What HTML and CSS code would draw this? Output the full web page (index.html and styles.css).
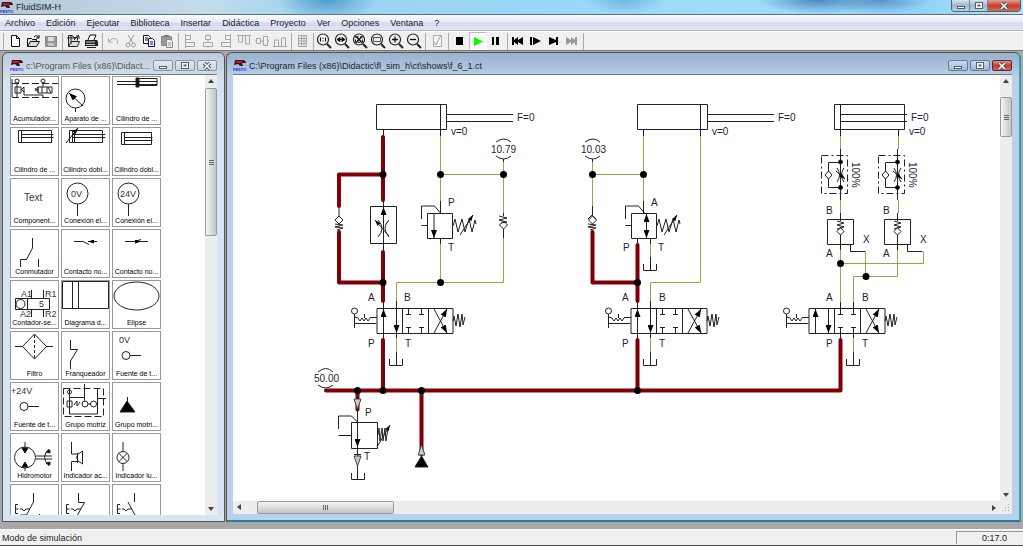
FILE: index.html
```
<!DOCTYPE html>
<html lang="es">
<head>
    <meta charset="UTF-8">
    <meta name="viewport" content="width=device-width, initial-scale=1.0">
    <title>FluidSIM-H</title>
    <link rel="stylesheet" href="styles.css">
</head>
<body>
    <!-- shared symbols -->
    <svg class="defs" width="0" height="0" aria-hidden="true">
        <defs>
            <symbol id="festo" viewBox="0 0 14 13">
                <path d="M2 1h9l2 2v1H9l1 3H7L5 5 1 6z" fill="#3a1420"/>
                <path d="M3 2h6v2H3z" fill="#d0102c"/>
                <text x="0" y="12" class="logo">FESTO</text>
            </symbol>
            <symbol id="win-min" viewBox="0 0 10 8"><rect x="1.500" y="4.500" width="7" height="2" fill="#fff" stroke="#555f6b"/></symbol>
            <symbol id="win-max" viewBox="0 0 10 8"><rect x="1.500" y=".500" width="7" height="6" fill="#fff" stroke="#555f6b"/><rect x="4" y="3" width="2" height="1" fill="#555f6b" stroke="#555f6b"/></symbol>
            <symbol id="win-close" viewBox="0 0 10 8"><path d="M2 1l6 6M8 1L2 7" stroke="#4d4f5a" stroke-width="3.400"/><path d="M2 1l6 6M8 1L2 7" stroke="#fff" stroke-width="1.600"/></symbol>
            <symbol id="lens" viewBox="0 0 18 18"><circle cx="8" cy="7.500" r="5.500" fill="none" stroke="#222" stroke-width="1.200"/><path d="M12 12l4 4" stroke="#222" stroke-width="2"/></symbol>
            <marker id="tip" viewBox="0 0 8 6" refX="8" refY="3" markerWidth="8" markerHeight="6" markerUnits="userSpaceOnUse" orient="auto"><path d="M0 0l8 3-8 3z"/></marker>
            <marker id="tip-s" viewBox="0 0 6 4" refX="6" refY="2" markerWidth="6" markerHeight="4" markerUnits="userSpaceOnUse" orient="auto"><path d="M0 0l6 2-6 2z"/></marker>
            <!-- 4/3 way valve with hand lever -->
            <g id="valve43">
                <path d="M377 308.500h76v25h-76zM402.500 308v25M428.500 308v25"/>
                <path d="M383.500 333v-24" marker-end="url(#tip)"/>
                <path d="M396.500 309v24" marker-end="url(#tip)"/>
                <path d="M408.500 309v5M406 314.500h5M421.500 309v5M419 314.500h5M408.500 333v-6M406 327.500h5M421.500 333v-6M419 327.500h5"/>
                <path d="M434 333l13-24" marker-end="url(#tip)"/>
                <path d="M434 309l13 24" marker-end="url(#tip)"/>
                <path d="M453 321l1-5 2 10 2-12 2 13 2-13 1 11 2-8"/>
                <circle cx="354.500" cy="311" r="3"/>
                <path d="M354.500 314v14M354.500 323.500h22M370 317.500h7M355 317l3 1 2 3 2-3 2 3 2-3 2 3 2-3M364.500 318v-4"/>
            </g>
            <path id="tank" d="M389.500 359v6.500h13V359"/>
            <g id="relief-pilot">
                <path d="M440.500 213l-6-7h-13v13M421.500 225.500h6M427.500 213.500h25v25h-25z"/>
                <path d="M453 226l2-7 3 13 4-13 3 13 4-13 3 13 3-12 1 4"/>
                <path d="M460 235l13-20" marker-end="url(#tip-s)"/>
            </g>
            <g id="throttle">
                <path class="dashed" d="M821.500 155.500h26v38h-26z"/>
                <path d="M840.500 149v51M840.500 162.500h-12v9M828.500 178v9.500h12M828.500 171l3.500 4-3.500 4-3.500-4zM837 168q5 7 0 14M844 168q-5 7 0 14"/>
                <path d="M836 171l9 8" marker-end="url(#tip-s)"/>
                <circle cx="840.500" cy="162" r="2" fill="#000"/><circle cx="840.500" cy="187.500" r="2" fill="#000"/>
            </g>
            <g id="lock">
                <path d="M827.500 219.500h26v25h-26zM840.500 213v8M840.500 235v15M850.500 245v6.500h15M837 221l7 2-7 2 7 2-7 2M840.500 227.500l3.500 4-3.500 3.500-3.500-3.500z"/>
            </g>
        </defs>
    </svg>

    <header class="titlebar">
        <svg class="app-icon"><use href="#festo"/></svg>
        <h1>FluidSIM-H</h1>
        <div class="app-buttons">
            <button aria-label="Minimizar"><svg><use href="#win-min"/></svg></button>
            <button aria-label="Restaurar"><svg><use href="#win-max"/></svg></button>
            <button class="close" aria-label="Cerrar"><svg><use href="#win-close"/></svg></button>
        </div>
    </header>

    <nav class="menu">
        <button>Archivo</button>
        <button>Edición</button>
        <button>Ejecutar</button>
        <button>Biblioteca</button>
        <button>Insertar</button>
        <button>Didáctica</button>
        <button>Proyecto</button>
        <button>Ver</button>
        <button>Opciones</button>
        <button>Ventana</button>
        <button>?</button>
    </nav>

    <div class="toolbar">
        <button aria-label="Nuevo"><svg viewBox="0 0 18 18"><path d="M5.500 3.500h5l3 3v8h-8zM10.500 3.500v3h3" fill="#fff" stroke="#111"/></svg></button>
        <button aria-label="Abrir"><svg viewBox="0 0 18 18"><path d="M3.500 14.500v-8h4l1 1h4v2M3.500 14.500l3-5h9l-3 5z" fill="#ddd" stroke="#111"/><path d="M10 5q3-3 5 1M15 3v3h-3" fill="none" stroke="#111"/></svg></button>
        <button aria-label="Guardar"><svg viewBox="0 0 18 18"><path d="M3.500 4.500h11v10h-11z" fill="#999" stroke="#888"/><path d="M6 5h6v4H6z" fill="#ddd"/><path d="M6 11h6v3H6z" fill="#c8c8c8"/></svg></button>
        <span class="sep"></span>
        <button aria-label="Vista previa"><svg viewBox="0 0 18 18"><path d="M4.500 14.500v-11h4l1 2h4v3M4.500 14.500l3-5h8l-2 5z" fill="#ddd" stroke="#222"/><path d="M3 6h8M7 3v9M12 4h3v3M10 8l5-5" stroke="#222" fill="none"/></svg></button>
        <button aria-label="Imprimir"><svg viewBox="0 0 18 18"><path d="M6 8l2-5h6l-2 5" fill="#fff" stroke="#111"/><path d="M3 8h12l1 2v4H3z" fill="#222"/><path d="M4 10h9M4 12.500h9" stroke="#ccc"/><path d="M5 15.500h9" stroke="#222"/></svg></button>
        <span class="sep"></span>
        <button disabled aria-label="Deshacer"><svg viewBox="0 0 18 18"><path d="M4.500 6v4h4M5 9q4-4 7-2t1 5" fill="none" stroke="#aaa"/></svg></button>
        <button disabled aria-label="Cortar"><svg viewBox="0 0 18 18"><path d="M6 3l5 8M12 3l-5 8" stroke="#999"/><circle cx="6" cy="13" r="2" fill="none" stroke="#999"/><circle cx="11.500" cy="13" r="2" fill="none" stroke="#999"/></svg></button>
        <button aria-label="Copiar"><svg viewBox="0 0 18 18"><path d="M3.500 3.500h5l2 2v6h-7z" fill="#fff" stroke="#111"/><path d="M5 6h3M5 8h3" stroke="#111"/><path d="M8.500 6.500h4l2 2v6h-6z" fill="#fff" stroke="#10107a"/><path d="M10 10h3M10 12h3" stroke="#10107a"/></svg></button>
        <button disabled aria-label="Pegar"><svg viewBox="0 0 18 18"><path d="M3.500 4.500h10v9h-10z" fill="#999" stroke="#888"/><path d="M6 3h5v2H6z" fill="#777"/><path d="M8.500 7.500h4l2 2v6h-6z" fill="#eee" stroke="#888"/><path d="M10 11h3M10 13h3" stroke="#999"/></svg></button>
        <span class="sep wide"></span>
        <button disabled aria-label="Alinear a la izquierda"><svg viewBox="0 0 18 18"><path class="align" d="M4.500 2v14M4.500 3.500h5v4h-5M4.500 10.500h9v4h-9"/></svg></button>
        <button disabled aria-label="Centrar horizontalmente"><svg viewBox="0 0 18 18"><path class="align" d="M6.500 3.500h5v4h-5zM4.500 10.500h9v4h-9zM9 2v1M9 8v2M9 15v1"/></svg></button>
        <button disabled aria-label="Alinear a la derecha"><svg viewBox="0 0 18 18"><path class="align" d="M13.500 2v14M13.500 3.500h-5v4h5M13.500 10.500h-9v4h9"/></svg></button>
        <button disabled aria-label="Alinear arriba"><svg viewBox="0 0 18 18"><path class="align" d="M2 3.500h14M3.500 4v6h4V4M10.500 4v8h4V4"/></svg></button>
        <button disabled aria-label="Centrar verticalmente"><svg viewBox="0 0 18 18"><path class="align" d="M3.500 6.500h4v5h-4zM10.500 4.500h4v9h-4zM2 9h1M8 9h2M15 9h1"/></svg></button>
        <button disabled aria-label="Alinear abajo"><svg viewBox="0 0 18 18"><path class="align" d="M2 14.500h14M3.500 14V8h4v6M10.500 14V6h4v8"/></svg></button>
        <span class="sep"></span>
        <button disabled aria-label="Cuadrícula"><svg viewBox="0 0 18 18"><path class="align" d="M5.500 3.500h8v11h-8zM8.500 3v11M11 3v11M5 6.500h8M5 9h8M5 11.500h8"/></svg></button>
        <span class="sep"></span>
        <button aria-label="Escala 1:1"><svg viewBox="0 0 18 18"><use href="#lens"/><path d="M5.500 5.500v4M8 6v1M8 8.500v1M10.500 5.500v4" stroke="#111"/></svg></button>
        <button aria-label="Vista anterior"><svg viewBox="0 0 18 18"><use href="#lens"/><path d="M4 7.500l3-2v4zM12 7.500l-3-2v4zM5 7.500h6" fill="#111" stroke="#111"/></svg></button>
        <button aria-label="Ajustar a ventana"><svg viewBox="0 0 18 18"><use href="#lens"/><path d="M5 4.500l6 6M11 4.500l-6 6" stroke="#111" stroke-width="1.500"/><path d="M4.500 4.500h7v6h-7z" fill="none" stroke="#333" stroke-dasharray="3 2"/></svg></button>
        <button aria-label="Zoom de zona"><svg viewBox="0 0 18 18"><use href="#lens"/><path d="M4.500 5.500h7v4h-7z" fill="none" stroke="#555"/></svg></button>
        <button aria-label="Ampliar"><svg viewBox="0 0 18 18"><use href="#lens"/><path d="M5 7.500h6M8 4.500v6" stroke="#111" stroke-width="1.300"/></svg></button>
        <button aria-label="Reducir"><svg viewBox="0 0 18 18"><use href="#lens"/><path d="M5 7.500h6" stroke="#111" stroke-width="1.300"/></svg></button>
        <span class="sep wide"></span>
        <button disabled aria-label="Comprobar"><svg viewBox="0 0 18 18"><path d="M5.500 3.500h8v11h-8z" fill="#f6f6f6" stroke="#aaa"/><path d="M6 10l2 3 5-10" fill="none" stroke="#999"/></svg></button>
        <span class="sep wide"></span>
        <button aria-label="Parar"><svg viewBox="0 0 18 18"><path d="M5 5h7v8H5z"/></svg></button>
        <button class="pressed" aria-label="Simular"><svg viewBox="1 1 16 16"><path d="M5 5l9 4.500L5 14z" fill="#0f0"/></svg></button>
        <button aria-label="Pausa"><svg viewBox="0 0 18 18"><path d="M5 5h2v8H5zM9 5h3v8H9z"/></svg></button>
        <span class="sep"></span>
        <button aria-label="Reiniciar"><svg viewBox="0 0 18 18"><path d="M3 5h2v3l4-3v3l5-3v8l-5-3v3l-4-3v3H3z"/></svg></button>
        <button aria-label="Paso"><svg viewBox="0 0 18 18"><path d="M3 5h2v8H3zM6 5l8 4-8 4z"/></svg></button>
        <button aria-label="Siguiente estado"><svg viewBox="0 0 18 18"><path d="M4 5l7 3V5h2v8h-2v-3l-7 3z"/></svg></button>
        <button disabled aria-label="Siguiente tema"><svg viewBox="0 0 18 18"><path d="M3 5l5 3V5l4 3V5h2v8h-2v-3l-4 3v-3l-5 3z" fill="#999"/></svg></button>
        <span class="sep"></span>
    </div>

    <main class="workspace">
        <section class="window library">
            <div class="window-title">
                <svg class="app-icon"><use href="#festo"/></svg>
                <h2>c:\Program Files (x86)\Didact...</h2>
                <button aria-label="Minimizar"><svg><use href="#win-min"/></svg></button>
                <button aria-label="Maximizar"><svg><use href="#win-max"/></svg></button>
                <button aria-label="Cerrar"><svg><use href="#win-close"/></svg></button>
            </div>
            <div class="client">
                <ul class="tiles">
                    <li><svg viewBox="0 0 47 37"><path d="M1 6.500h46M1 20.500h46" stroke-dasharray="7 3"/><path d="M1 2v18M6 6v15M32 5v5M13 14v4h19v3M10 13l3-3v5l-3-3M24 11l3 4v-5l-3 4"/><path d="M4 10h6v6H4zM27 10h14v6H27z"/><path d="M31 10v6M36 10v6M37 10l3 6"/><circle cx="6" cy="4" r="2"/><circle cx="32" cy="4" r="2"/></svg>Acumulador...</li>
                    <li><svg viewBox="0 0 47 37"><circle cx="13.500" cy="21.500" r="9.500"/><path d="M21 29L7 16" marker-end="url(#tip)"/><path d="M13.500 31v4"/></svg>Aparato de ...</li>
                    <li><svg viewBox="0 0 47 37"><path d="M4 4.500h40M4 7.500h40M24 1.500h20v7H24z"/><path d="M23 1h3v9h-3z" fill="#111"/></svg>Cilindro de ...</li>
                    <li><svg viewBox="0 0 47 37"><path d="M7.500 2.500h33v12h-33zM10.500 2v12M10.500 6.500h32M10.500 9.500h32"/></svg>Cilindro de ...</li>
                    <li><svg viewBox="0 0 47 37"><path d="M7.500 2.500h33v12h-33zM10.500 2v12M12.500 2v12M10.500 6.500h33M10.500 9.500h33"/><path d="M4 15L16 0" marker-end="url(#tip-s)"/></svg>Cilindro dobl...</li>
                    <li><svg viewBox="0 0 47 37"><path d="M8.500 4.500h30v12h-30zM11.500 4v12M11.500 9.500h28M11.500 12.500h28"/></svg>Cilindro dobl...</li>
                    <li><svg viewBox="0 0 47 37"><text class="big" x="13" y="22">Text</text></svg>Component...</li>
                    <li><svg viewBox="0 0 47 37"><circle cx="15.500" cy="14.500" r="10.500"/><path d="M15.500 25v12"/><text x="9" y="18">0V</text></svg>Conexión el...</li>
                    <li><svg viewBox="0 0 47 37"><circle cx="15.500" cy="14.500" r="10.500"/><path d="M15.500 25v12"/><text x="7" y="18">24V</text></svg>Conexión el...</li>
                    <li><svg viewBox="0 0 47 37"><path d="M21.500 8v10l-6 11.500h-6V37M27.500 29v8"/></svg>Conmutador</li>
                    <li><svg viewBox="0 0 47 37"><path d="M12 11.500h9l6 3M35 11.500h-7"/><path d="M35 11.500h-9" marker-end="url(#tip-s)"/></svg>Contacto no...</li>
                    <li><svg viewBox="0 0 47 37"><path d="M12 11.500h9l7-2M35 11.500h-7"/><path d="M21 11.500h7" marker-end="url(#tip-s)"/></svg>Contacto no...</li>
                    <li><svg viewBox="0 0 47 37"><path d="M4.500 17.500h34v11h-34zM16.500 17v11M20.500 9v8M32.500 9v8M20.500 29v7M32.500 29v7"/><circle cx="9.500" cy="23" r="4.500"/><text x="10" y="16">A1</text><text x="34" y="16">R1</text><text x="9" y="36">A2</text><text x="34" y="36">R2</text><text x="28" y="26">5</text></svg>Contador-se...</li>
                    <li><svg viewBox="0 0 47 37"><path d="M.500.500h46v27H.500zM10.500 0v27M16.500 0v27"/></svg>Diagrama d...</li>
                    <li><svg viewBox="0 0 47 37"><ellipse cx="23.500" cy="15" rx="22.500" ry="14"/></svg>Elipse</li>
                    <li><svg viewBox="0 0 47 37"><path d="M23.500 2l12 12.500-12 12.500-12-12.500zM4 14.500h8M35 14.500h7"/><path d="M23.500 3v24" stroke-dasharray="3 2"/></svg>Filtro</li>
                    <li><svg viewBox="0 0 47 37"><path d="M8.500 8v9.500h7L8.500 29v8"/></svg>Franqueador</li>
                    <li><svg viewBox="0 0 47 37"><text x="6" y="11">0V</text><circle cx="13" cy="23.500" r="4"/><path d="M17 23.500h11"/></svg>Fuente de t...</li>
                    <li><svg viewBox="0 0 47 37"><text x="0" y="11">+24V</text><circle cx="13" cy="23.500" r="4"/><path d="M17 23.500h11"/></svg>Fuente de t...</li>
                    <li><svg viewBox="0 0 47 37"><path d="M1.500 5.500h40v28h-40z" stroke-dasharray="7 3"/><path d="M7.500 5v26h28V5M22.500 1v17M7 14.500h16M36 15.500h8M5 18h5v6H5zM12 22l3-4v5l3-4M26 21h3"/><circle cx="23" cy="21" r="3"/><circle cx="31.500" cy="21" r="3"/><circle cx="7.500" cy="9" r="2"/></svg>Grupo motriz</li>
                    <li><svg viewBox="0 0 47 37"><path d="M14.500 14v6"/><path d="M7 29h15l-8-11z" fill="#000"/></svg>Grupo motri...</li>
                    <li><svg viewBox="0 0 47 37"><circle cx="14" cy="23.500" r="10.500"/><path d="M14 8v8M14 32v5M25 22h16M25 25h16M38 15q-9 8 0 17"/><path d="M11 14h6l-3 5zM11 33h6l-3-5zM35 18l4-2v3zM35 29l4 2v-3z" fill="#000"/></svg>Hidromotor</li>
                    <li><svg viewBox="0 0 47 37"><path d="M9.500 8v12h6M9.500 37V27.500h6M15.500 19v10M20.500 17v13q-6-3-6-6.500t6-6.500"/></svg>Indicador ac...</li>
                    <li><svg viewBox="0 0 47 37"><circle cx="10" cy="23.500" r="6"/><path d="M10 8v9M10 30v7M6 19.500l8 8M14 19.500l-8 8"/></svg>Indicador lu...</li>
                    <li><svg viewBox="0 0 47 37"><path d="M22.500 8v9l-7 13h-6M7 19.500H4.500v9H7M4.500 24h3M9 24h2l2 2 2-2h4M28.500 29v8"/></svg></li>
                    <li><svg viewBox="0 0 47 37"><path d="M16.500 8v9.500h6l-7 12.500M7 19.500H4.500v9H7M4.500 24h3M9 24h2l2 2 2-2h4"/></svg></li>
                    <li><svg viewBox="0 0 47 37"><path d="M21.500 8v9M15 17l7 13M7 19.500H4.500v9H7M4.500 24h3M9 24h2l2 2 2-2h3"/></svg></li>
                </ul>
                <div class="vscroll">
                    <button aria-label="Subir"><svg viewBox="0 0 6 4"><path d="M0 4l3-4 3 4z"/></svg></button>
                    <div class="thumb long"><i></i><i></i><i></i></div>
                    <button aria-label="Bajar"><svg viewBox="0 0 6 4"><path d="M0 0h6L3 4z"/></svg></button>
                </div>
            </div>
        </section>

        <section class="window circuit active">
            <div class="window-title">
                <svg class="app-icon"><use href="#festo"/></svg>
                <h2>C:\Program Files (x86)\Didactic\fl_sim_h\ct\shows\f_6_1.ct</h2>
                <button aria-label="Minimizar"><svg><use href="#win-min"/></svg></button>
                <button aria-label="Maximizar"><svg><use href="#win-max"/></svg></button>
                <button class="close" aria-label="Cerrar"><svg><use href="#win-close"/></svg></button>
            </div>
            <div class="client">
                <div class="canvas">
                    <svg class="drawing" viewBox="233 75 768 427">
                        <!-- tubes without pressure -->
                        <g class="low">
                            <path d="M440.500 136v65M440.500 174.500h63.500M503.500 161v52M503.500 238v44.500h-107V301M440.500 243v39M396.500 338v14"/>
                            <path d="M643.500 136v65M643.500 174.500h-51M592.500 161v46M700.500 136v146.500h-50V301M650.500 243v14M650.500 338v14"/>
                            <path d="M840.500 136v13M898.500 136v13M840.500 200v13M898.500 200v13M840.500 250v52M865.500 252v24M897.500 250v26.500h-44V302M923.500 252v11.500h-83M853.500 338v14"/>
                        </g>
                        <!-- pressure tubes -->
                        <g class="high">
                            <path d="M383 137v63M383 174.500h-44V206M339 232v50.500h44M383 252v49M383 340v50.500"/>
                            <path d="M592.500 232v50.500h45M637.500 245v56M637.500 340v50.500"/>
                            <path d="M326 390.500h514.500V340M357.500 390.500v19M421.500 390.500v64"/>
                        </g>

                        <g class="part">
                            <!-- circuit 1 -->
                            <path d="M376.500 104.500h70v25h-70zM440.500 104v32M447 114.500h66M447 121.500h66M383.500 130v6"/>
                            <path d="M370.500 206.500h26v37h-26zM383.500 250v-6M383.500 201v6M378 220q8 8 0 17M389 220q-8 8 0 17"/>
                            <path d="M383.500 244v-37" marker-end="url(#tip)"/>
                            <path d="M389 236l-14-16" marker-end="url(#tip-s)"/>
                            <path d="M339 207v9M339 216l4 4-4 4-4-4zM335 224l8 1-8 2 8 1-6 2"/>
                            <path d="M440.500 201v12M440.500 239v5M503.500 159v3M503.500 213v3M499 216l8 2-8 2 8 2-6 1M503.500 221l4 4-4 4-4-4zM503.500 229v9"/>
                            <use href="#relief-pilot"/>
                            <path d="M434 214v24" marker-end="url(#tip)"/>
                            <path d="M396.500 301v37M383.500 302v37M396.500 352v13"/>
                            <use href="#valve43"/>
                            <use href="#tank"/>
                            <path d="M496 142q8-6 15 0M496 156q8 6 15 0"/>

                            <!-- circuit 2 -->
                            <path d="M637.500 104.500h70v25h-70zM700.500 104v32M708 114.500h66M708 121.500h66M643.500 130v6M643.500 201v12"/>
                            <path d="M592.500 159v3M592.500 206v9M592.500 216l4 4-4 4-4-4zM588 219l4-4 4 4M588 224l8 1-8 2 8 1-6 2"/>
                            <use href="#relief-pilot" transform="translate(204)"/>
                            <path d="M646.500 226v-12" marker-end="url(#tip)"/>
                            <path d="M646.500 226v12" marker-end="url(#tip)"/>
                            <path d="M637.500 239v6M650.500 239v5M650.500 257v13M650.500 301v37M637.500 302v37M650.500 352v13"/>
                            <use href="#tank" transform="translate(254 -95)"/>
                            <use href="#valve43" transform="translate(254)"/>
                            <use href="#tank" transform="translate(254)"/>
                            <path d="M585 142q8-6 15 0M585 156q8 6 15 0"/>

                            <!-- circuit 3 -->
                            <path d="M834.500 104.500h70v25h-70zM840.500 104v32M841 114.500h66M841 121.500h66M898.500 130v6"/>
                            <use href="#throttle"/>
                            <use href="#throttle" transform="translate(57)"/>
                            <use href="#lock"/>
                            <use href="#lock" transform="translate(57)"/>
                            <use href="#valve43" transform="translate(432)"/>
                            <path d="M840.500 302v7M853.500 302v7M840.500 333v6M853.500 333v5M853.500 352v13"/>
                            <use href="#tank" transform="translate(457)"/>

                            <!-- supply -->
                            <path d="M318 372q8-7 15 0M318 385q8 6 15 0"/>
                            <path d="M357.500 409v70M357.500 422l-6-6h-13v13M338.500 435.500h13M351.500 422.500h26v26h-26zM351.500 473v6.500h13V473M354 454.500h7"/>
                            <path d="M357.500 425v22" marker-end="url(#tip)"/>
                            <path d="M378 435l1-7 1 13 2-13 1 13 2-13 1 13 2-13"/>
                            <path d="M377 447l13-22" marker-end="url(#tip-s)"/>
                            <path class="flow" d="M354 399h7l-3.500 10zM354 456h7l-3.500 10zM418 455h7l-3.500-10z"/>
                            <path d="M415 467h13l-6.500-11z" fill="#000"/>
                        </g>

                        <g class="nodes">
                            <circle cx="383" cy="174.500" r="3.500"/><circle cx="440.500" cy="174.500" r="3.500"/><circle cx="503.500" cy="174.500" r="3.500"/>
                            <circle cx="383" cy="282.500" r="3.500"/><circle cx="440.500" cy="282.500" r="3.500"/>
                            <circle cx="592.500" cy="174.500" r="3.500"/><circle cx="643.500" cy="174.500" r="3.500"/><circle cx="637.500" cy="282.500" r="3.500"/>
                            <circle cx="840.500" cy="263.500" r="3.500"/><circle cx="866" cy="276.500" r="3.500"/>
                            <circle cx="357.500" cy="390.500" r="3.500"/><circle cx="383" cy="390.500" r="3.500"/><circle cx="421.500" cy="390.500" r="3.500"/><circle cx="637.500" cy="390.500" r="3.500"/>
                        </g>

                        <g class="labels">
                            <text x="517" y="121">F=0</text><text x="451" y="135">v=0</text>
                            <text x="778" y="121">F=0</text><text x="712" y="135">v=0</text>
                            <text x="911" y="121">F=0</text><text x="909" y="135">v=0</text>
                            <text x="491" y="153">10.79</text><text x="581" y="153">10.03</text><text x="314" y="382">50.00</text>
                            <text x="448" y="206">P</text><text x="448" y="251">T</text>
                            <text x="651" y="206">A</text><text x="623" y="251">P</text><text x="658" y="251">T</text>
                            <text x="368" y="301">A</text><text x="404" y="301">B</text><text x="368" y="347">P</text><text x="405" y="347">T</text>
                            <text x="622" y="301">A</text><text x="659" y="301">B</text><text x="622" y="347">P</text><text x="659" y="347">T</text>
                            <text x="826" y="301">A</text><text x="862" y="301">B</text><text x="826" y="347">P</text><text x="862" y="347">T</text>
                            <text x="826" y="214">B</text><text x="883" y="214">B</text>
                            <text x="826" y="257">A</text><text x="883" y="257">A</text>
                            <text x="863" y="243">X</text><text x="920" y="243">X</text>
                            <text x="365" y="416">P</text><text x="364" y="460">T</text>
                            <text transform="translate(852 162) rotate(90)">100%</text>
                            <text transform="translate(909 162) rotate(90)">100%</text>
                        </g>
                    </svg>
                </div>
                <div class="vscroll">
                    <button aria-label="Subir"><svg viewBox="0 0 6 4"><path d="M0 4l3-4 3 4z"/></svg></button>
                    <div class="thumb"><i></i><i></i><i></i></div>
                    <button aria-label="Bajar"><svg viewBox="0 0 6 4"><path d="M0 0h6L3 4z"/></svg></button>
                </div>
                <div class="hscroll">
                    <button aria-label="Izquierda"><svg viewBox="0 0 4 6"><path d="M4 0v6L0 3z"/></svg></button>
                    <div class="thumb"><i></i><i></i><i></i></div>
                    <button aria-label="Derecha"><svg viewBox="0 0 4 6"><path d="M0 0v6l4-3z"/></svg></button>
                </div>
                <svg class="grip" viewBox="0 0 12 13"><path d="M8 3h1v1H8zM5 6h1v1H5zM8 6h1v1H8zM2 9h1v1H2zM5 9h1v1H5zM8 9h1v1H8z"/></svg>
            </div>
        </section>
    </main>

    <footer class="status">
        <span>Modo de simulación</span>
        <time>0:17.0</time>
    </footer>
</body>
</html>
```
FILE: styles.css
```
* {
    box-sizing: border-box;
}
body {
    margin: 0;
    height: 100vh;
    display: flex;
    flex-direction: column;
    overflow: hidden;
    font-family: "Liberation Sans", Arial, sans-serif;
    font-size: 9px;
    color: #222;
    background: #f0f0f0;
}
button {
    margin: 0;
    padding: 0;
    border: 0;
    background: none;
    font: inherit;
    color: inherit;
}
h1, h2 {
    margin: 0;
    font-size: 9px;
    font-weight: normal;
    white-space: nowrap;
}
.defs {
    position: absolute;
}
.logo {
    font-size: 4px;
    font-weight: bold;
    fill: #1a1af0;
}
.app-icon {
    width: 14px;
    height: 13px;
    flex: none;
}

/* main title bar */
.titlebar {
    display: flex;
    align-items: center;
    gap: 2px;
    height: 15px;
    flex: none;
    border-bottom: 1px solid #5b7186;
    background:
        radial-gradient(ellipse 60px 14px at 80% 0, #4f86bd, transparent),
        radial-gradient(ellipse 50px 14px at 86% 0, #5a92c6, transparent),
        radial-gradient(ellipse 50px 20px at 32% 0, #4f9dcc, transparent),
        radial-gradient(ellipse 40px 14px at 61% 0, #6fb4df, transparent),
        linear-gradient(90deg, #b4c8d8, #c3dcea 20%, #9fd3ef 30%, #9bd6f8 50%, #9fdcfb 75%, #8fd3f7 90%, #b8e4f8);
}
.app-buttons {
    display: flex;
    align-self: flex-start;
    height: 12px;
    margin-left: auto;
    margin-right: 2px;
    border: 1px solid #4d6478;
    border-top: 0;
    border-radius: 0 0 4px 4px;
    overflow: hidden;
}
.app-buttons button {
    width: 18px;
    display: flex;
    align-items: center;
    justify-content: center;
    border-right: 1px solid #6f8798;
    background: linear-gradient(#d3e3ee, #9fb8c9 50%, #b9d4e4);
}
.app-buttons .close {
    width: 32px;
    border: 0;
    background: linear-gradient(#e2a397, #c5412d 50%, #d66a50);
}
.app-buttons svg, .window-title button svg {
    width: 10px;
    height: 8px;
}

.menu {
    display: flex;
    align-items: center;
    height: 16px;
    flex: none;
    border-bottom: 1px solid #b4b7c2;
    background: linear-gradient(#fbfcff, #e8ecf8 45%, #d5dbef 55%, #dfe4f5);
}
.menu button {
    padding: 0 6px 0 5px;
}

/* toolbar */
.toolbar {
    display: flex;
    align-items: center;
    height: 20px;
    flex: none;
    padding-left: 3px;
    border-top: 1px solid #fff;
    border-bottom: 1px solid #777;
    background: #f0f0f0;
}
.toolbar::before {
    content: "";
    width: 2px;
    height: 17px;
    border-left: 1px solid #aaa;
}
.toolbar button {
    width: 18px;
    height: 18px;
    flex: none;
}
.toolbar svg {
    display: block;
    width: 18px;
    height: 18px;
}
.toolbar .pressed {
    border: 1px solid #bbb;
    border-right-color: #fff;
    border-bottom-color: #fff;
    background: #f8f8f8;
}
.toolbar .pressed svg {
    width: 16px;
    height: 16px;
}
.align {
    fill: none;
    stroke: #a6a6a6;
}
.sep {
    width: 4px;
    height: 17px;
    flex: none;
    background: linear-gradient(#aaa, #aaa) center / 1px 100% no-repeat;
}
.sep.wide {
    width: 5px;
}

/* MDI area */
.workspace {
    display: flex;
    gap: 1px;
    flex: 1;
    min-height: 0;
    padding: 1px 2px 7px 2px;
    background: #a8a8a8;
}
.window {
    display: flex;
    flex-direction: column;
    padding: 0 7px 6px 6px;
    border: 1px solid #555;
    border-radius: 6px 6px 0 0;
    background: linear-gradient(#bccbd9, #d7e4f2 30px);
}
.library {
    width: 223px;
    flex: none;
    padding-left: 7px;
    color: #555;
}
.circuit {
    flex: 1;
    min-width: 0;
}
.active {
    border-right: 2px solid #2e9fb5;
    border-bottom: 2px solid #257f96;
    background: linear-gradient(#98b1cd, #b9d1ea 25px);
}
.window-title {
    display: flex;
    align-items: center;
    gap: 2px;
    height: 21px;
    flex: none;
    padding-top: 4px;
}
.window-title h2 {
    flex: 1;
    overflow: hidden;
}
.window-title button {
    display: flex;
    align-items: center;
    justify-content: center;
    width: 20px;
    height: 11px;
    border: 1px solid #8595a8;
    border-radius: 2px;
    background: linear-gradient(#e0e9f2, #c8d6e4);
}
.active .window-title button {
    border-color: #647d9c;
    background: linear-gradient(#c8daee, #9fb9d6);
}
.active .window-title .close {
    border-color: #6b2029;
    background: linear-gradient(#e0998e, #c23d2b 50%, #d56a55);
}
.client {
    display: grid;
    grid-template-columns: minmax(0, 1fr) 12px;
    grid-template-rows: minmax(0, 1fr);
    flex: 1;
    min-height: 0;
    border-top: 1px solid #777;
    background: #fff;
    overflow: hidden;
}
.circuit .client {
    grid-template-rows: minmax(0, 1fr) 13px;
}

/* component tiles */
.tiles {
    display: grid;
    grid-template-columns: repeat(3, 49px);
    grid-auto-rows: 49px;
    gap: 2px;
    margin: 0;
    padding: 1px 0;
    list-style: none;
    min-height: 0;
    overflow: hidden;
}
.tiles li {
    border: 1px solid #999;
    font-size: 7px;
    line-height: 10px;
    text-align: center;
    white-space: nowrap;
    color: #000;
}
.tiles svg {
    display: block;
    width: 47px;
    height: 37px;
    fill: none;
    stroke: #222;
}
.tiles text {
    font-size: 9px;
    fill: #333;
    stroke: none;
}
.tiles .big {
    font-size: 10px;
}

/* scrollbars */
.vscroll, .hscroll {
    display: flex;
    background: #ededed;
}
.vscroll {
    flex-direction: column;
}
.vscroll button, .hscroll button {
    display: flex;
    align-items: center;
    justify-content: center;
    width: 12px;
    height: 12px;
    flex: none;
}
.vscroll button:last-child, .hscroll button:last-child {
    margin-top: auto;
    margin-left: auto;
}
.vscroll button svg, .hscroll button svg {
    width: 6px;
    height: 4px;
    fill: #444;
}
.hscroll button svg {
    width: 4px;
    height: 6px;
}
.thumb {
    display: flex;
    align-items: center;
    justify-content: center;
    gap: 1px;
    border: 1px solid #999;
    border-radius: 2px;
}
.vscroll .thumb {
    flex-direction: column;
    height: 40px;
    margin-top: 10px;
    background: linear-gradient(90deg, #f6f6f6, #dcdcdc 50%, #c4c4c4);
}
.vscroll .thumb.long {
    height: 148px;
    margin-top: 1px;
}
.hscroll .thumb {
    width: 137px;
    margin-left: 12px;
    background: linear-gradient(#f6f6f6, #dcdcdc 50%, #c4c4c4);
}
.thumb i {
    width: 5px;
    height: 1px;
    background: #666;
}
.hscroll .thumb i {
    width: 1px;
    height: 5px;
}
.grip {
    width: 12px;
    height: 13px;
    background: #ededed;
    fill: #aaa;
}

/* circuit drawing */
.canvas {
    overflow: hidden;
    min-height: 0;
}
.drawing {
    display: block;
    width: 768px;
    height: 427px;
}
.part {
    fill: none;
    stroke: #222;
    stroke-width: 1;
}
.part .flow {
    fill: #ccc;
    stroke: #444;
}
.dashed {
    stroke-dasharray: 7 3 2 3;
}
.low {
    fill: none;
    stroke: #a5a046;
}
.high {
    fill: none;
    stroke: #800008;
    stroke-width: 4;
    stroke-linejoin: round;
    stroke-linecap: round;
}
.labels {
    font-size: 10px;
    fill: #223;
}
marker path {
    fill: #000;
    stroke: none;
}

.status {
    display: flex;
    align-items: center;
    justify-content: space-between;
    height: 17px;
    flex: none;
    padding-left: 2px;
    border-top: 1px solid #fff;
    border-bottom: 1px solid #555;
    background: #f0f0f0;
}
.status time {
    width: 67px;
    height: 13px;
    padding-right: 16px;
    line-height: 13px;
    text-align: right;
    border-top: 1px solid #999;
    border-left: 1px solid #999;
}
```
